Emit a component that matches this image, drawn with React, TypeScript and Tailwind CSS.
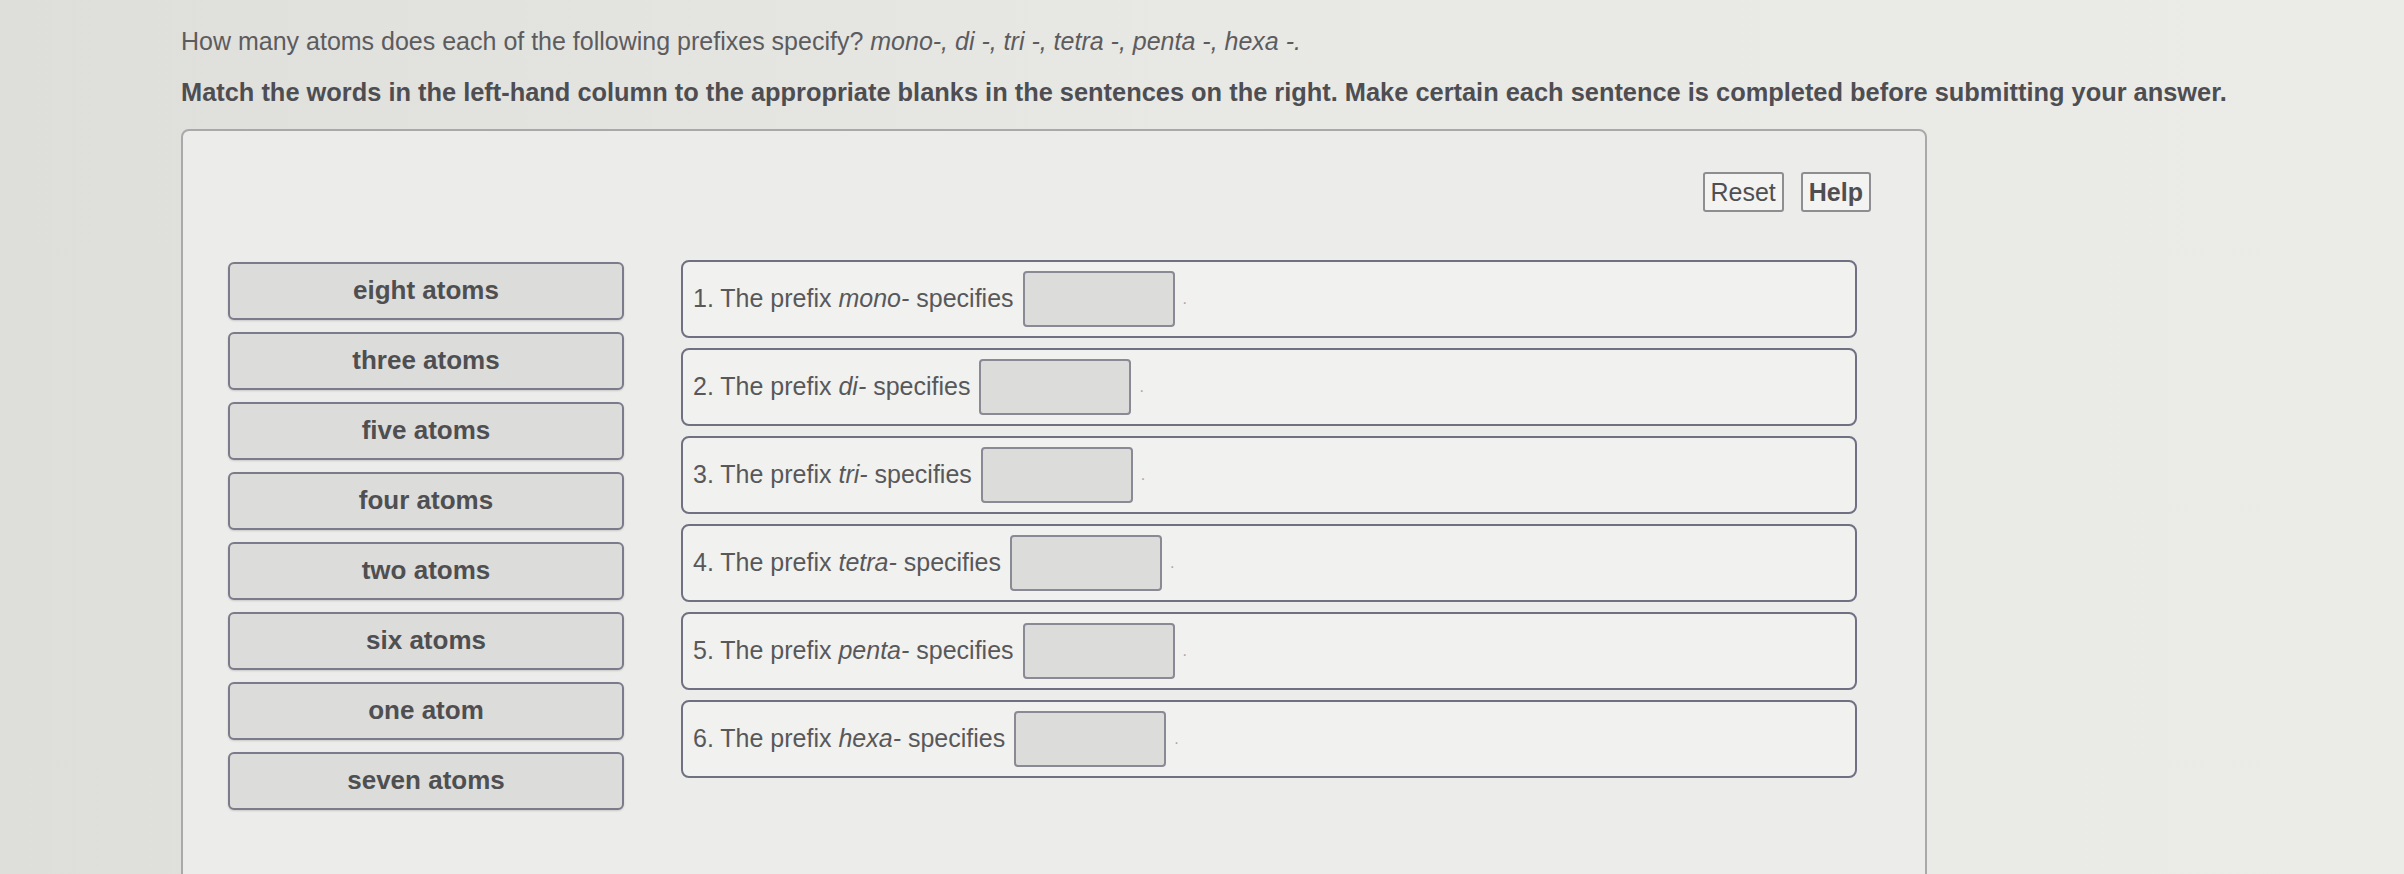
import React from "react";

const words = [
  "eight atoms",
  "three atoms",
  "five atoms",
  "four atoms",
  "two atoms",
  "six atoms",
  "one atom",
  "seven atoms",
];

const sentences = [
  { n: 1, prefix: "mono-" },
  { n: 2, prefix: "di-" },
  { n: 3, prefix: "tri-" },
  { n: 4, prefix: "tetra-" },
  { n: 5, prefix: "penta-" },
  { n: 6, prefix: "hexa-" },
];

function WordTile({ label }: { label: string }) {
  return (
    <div className="flex h-[58px] w-[396px] items-center justify-center rounded-[6px] border-2 border-[#7b7b8c] bg-[#dcdcda] pb-[2px] text-[26px] font-bold text-[#4f4f52] shadow-[0_1px_2px_rgba(0,0,0,0.15)]">
      {label}
    </div>
  );
}

function SentenceRow({ n, prefix }: { n: number; prefix: string }) {
  return (
    <div className="flex h-[78px] w-[1176px] items-center rounded-[8px] border-2 border-[#6f7082] bg-[#f1f1ef] pl-[10px] text-[25px] text-[#58585a]">
      <span>
        {n}. The prefix <i>{prefix}</i> specifies
      </span>
      <div className="ml-[9px] h-[56px] w-[152px] rounded-[4px] border-2 border-[#8a8a94] bg-[#dcdcda]" />
      <span className="ml-[8px] text-[16px] text-[#a8a8a8]">.</span>
    </div>
  );
}

export default function App() {
  return (
    <div className="h-[874px] w-[2404px] overflow-hidden bg-gradient-to-r from-[#dededb] via-[#e8e8e5] to-[#ebebe8] pl-[181px] pt-[27px] font-['Liberation_Sans',Arial,sans-serif]">
      <p className="text-[25px] leading-[28px] text-[#5c5c5e]">
        How many atoms does each of the following prefixes specify?{" "}
        <i>mono-, di -, tri -, tetra -, penta -, hexa -.</i>
      </p>
      <p className="mt-[23px] text-[25.4px] font-bold leading-[28px] text-[#4e4e52]">
        Match the words in the left-hand column to the appropriate blanks in the sentences on the right. Make certain each sentence is completed before submitting your answer.
      </p>
      <div className="mt-[23px] h-[760px] w-[1746px] rounded-[8px] border-2 border-[#a9a9ab] bg-[#ececea] pl-[45px] pr-[54px] pt-[41px]">
        <div className="flex justify-end gap-[17px]">
          <button className="h-[40px] rounded-[3px] border-2 border-[#8d8d92] bg-[#f3f3f1] px-[6px] text-[25px] text-[#4f4f52]">
            Reset
          </button>
          <button className="h-[40px] rounded-[3px] border-2 border-[#8d8d92] bg-[#f3f3f1] px-[6px] text-[25px] font-bold text-[#4f4f52]">
            Help
          </button>
        </div>
        <div className="mt-[50px] flex gap-[57px]">
          <div className="flex flex-col gap-[12px]">
            {words.map((w) => (
              <WordTile key={w} label={w} />
            ))}
          </div>
          <div className="-mt-[2px] flex flex-col gap-[10px]">
            {sentences.map((s) => (
              <SentenceRow key={s.n} n={s.n} prefix={s.prefix} />
            ))}
          </div>
        </div>
      </div>
    </div>
  );
}
